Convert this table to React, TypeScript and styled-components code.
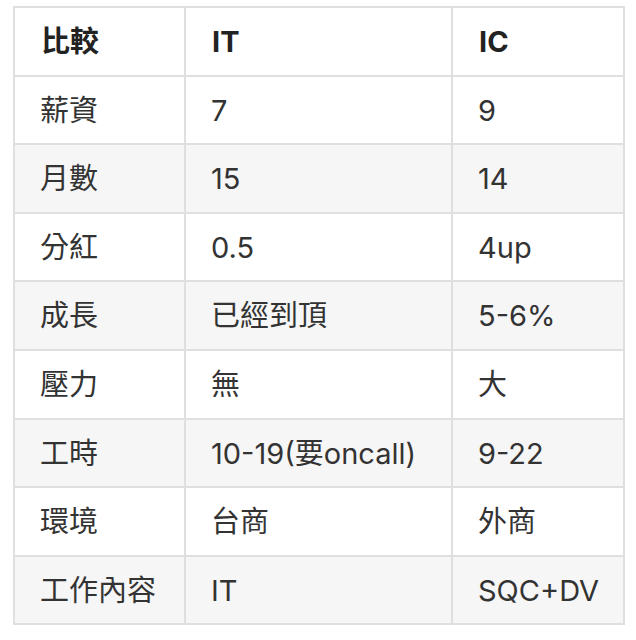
import { FC } from 'react';
import styled, { createGlobalStyle } from 'styled-components';

const GlobalStyle = createGlobalStyle`
  html, body {
    margin: 0;
    padding: 0;
    background-color: #fff;
  }
  body {
    font-family: Inter, 'Noto Sans CJK TC', sans-serif;
    color: #333;
  }
`;

const Wrapper = styled.div`
  padding: 6px 13px;
`;

const Table = styled.table`
  border-collapse: collapse;
  border-spacing: 0;
  width: 610px;
  table-layout: fixed;
  font-size: 29px;
  line-height: 42.6px;
`;

const Row = styled.tr<{ $striped?: boolean }>`
  background-color: ${(props) => (props.$striped ? '#f6f6f6' : '#fff')};
`;

const Head = styled.th`
  border: 2px solid #dfdfdf;
  padding: 13px 26px 11px;
  text-align: left;
  font-weight: 700;
  color: #222;
  white-space: nowrap;
`;

const Cell = styled.td`
  border: 2px solid #dfdfdf;
  padding: 13px 25px 11px;
  text-align: left;
  white-space: nowrap;
`;

type RowType = [string, string, string];

const rows: RowType[] = [
  ['薪資', '7', '9'],
  ['月數', '15', '14'],
  ['分紅', '0.5', '4up'],
  ['成長', '已經到頂', '5-6%'],
  ['壓力', '無', '大'],
  ['工時', '10-19(要oncall)', '9-22'],
  ['環境', '台商', '外商'],
  ['工作內容', 'IT', 'SQC+DV'],
];

const App: FC = () => {
  return (
    <>
      <GlobalStyle />
      <Wrapper>
        <Table>
          <colgroup>
            <col style={{ width: 171 }} />
            <col style={{ width: 267 }} />
            <col style={{ width: 172 }} />
          </colgroup>
          <thead>
            <Row>
              <Head>比較</Head>
              <Head>IT</Head>
              <Head>IC</Head>
            </Row>
          </thead>
          <tbody>
            {rows.map((row, i) => (
              <Row key={row[0]} $striped={i % 2 === 1}>
                {row.map((text, j) => (
                  <Cell key={j}>{text}</Cell>
                ))}
              </Row>
            ))}
          </tbody>
        </Table>
      </Wrapper>
    </>
  );
};

export default App;
